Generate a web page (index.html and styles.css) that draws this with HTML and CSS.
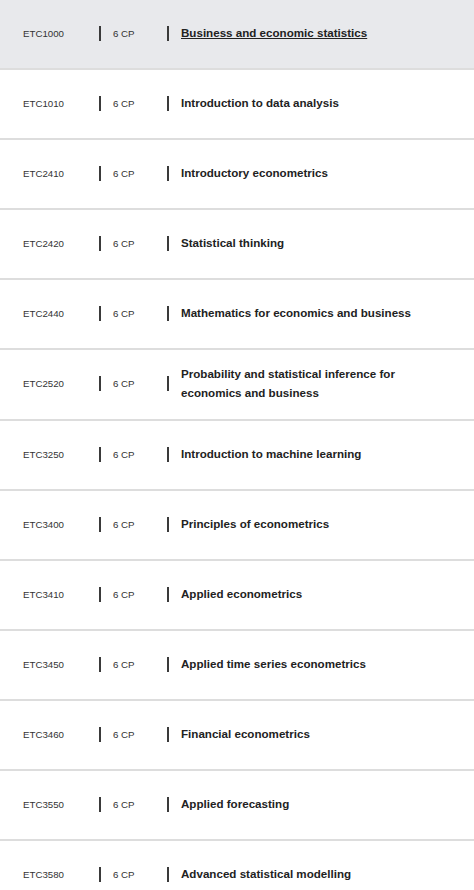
FILE: index.html
```html
<!DOCTYPE html>
<html lang="en">
<head>
<meta charset="utf-8">
<title>Units</title>
<link rel="stylesheet" href="styles.css">
</head>
<body>
<ul class="units">
  <li class="unit unit--active"><span class="code">ETC1000</span><span class="cp">6 CP</span><a class="title" href="#"><span class="title-text">Business and economic statistics</span></a></li>
  <li class="unit"><span class="code">ETC1010</span><span class="cp">6 CP</span><a class="title" href="#"><span class="title-text">Introduction to data analysis</span></a></li>
  <li class="unit"><span class="code">ETC2410</span><span class="cp">6 CP</span><a class="title" href="#"><span class="title-text">Introductory econometrics</span></a></li>
  <li class="unit"><span class="code">ETC2420</span><span class="cp">6 CP</span><a class="title" href="#"><span class="title-text">Statistical thinking</span></a></li>
  <li class="unit"><span class="code">ETC2440</span><span class="cp">6 CP</span><a class="title" href="#"><span class="title-text">Mathematics for economics and business</span></a></li>
  <li class="unit"><span class="code">ETC2520</span><span class="cp">6 CP</span><a class="title" href="#"><span class="title-text">Probability and statistical inference for economics and business</span></a></li>
  <li class="unit"><span class="code">ETC3250</span><span class="cp">6 CP</span><a class="title" href="#"><span class="title-text">Introduction to machine learning</span></a></li>
  <li class="unit"><span class="code">ETC3400</span><span class="cp">6 CP</span><a class="title" href="#"><span class="title-text">Principles of econometrics</span></a></li>
  <li class="unit"><span class="code">ETC3410</span><span class="cp">6 CP</span><a class="title" href="#"><span class="title-text">Applied econometrics</span></a></li>
  <li class="unit"><span class="code">ETC3450</span><span class="cp">6 CP</span><a class="title" href="#"><span class="title-text">Applied time series econometrics</span></a></li>
  <li class="unit"><span class="code">ETC3460</span><span class="cp">6 CP</span><a class="title" href="#"><span class="title-text">Financial econometrics</span></a></li>
  <li class="unit"><span class="code">ETC3550</span><span class="cp">6 CP</span><a class="title" href="#"><span class="title-text">Applied forecasting</span></a></li>
  <li class="unit"><span class="code">ETC3580</span><span class="cp">6 CP</span><a class="title" href="#"><span class="title-text">Advanced statistical modelling</span></a></li>
</ul>
</body>
</html>
```
FILE: styles.css
```css
* { box-sizing: border-box; }
html, body {
  margin: 0;
  padding: 0;
  background: #ffffff;
  font-family: "Liberation Sans", Arial, sans-serif;
  color: #222;
}
.units {
  list-style: none;
  margin: 0;
  padding: 0;
}
.unit {
  display: flex;
  align-items: center;
  min-height: 70px;
  padding: 15px 40px 17px 23px;
  border-bottom: 2px solid #dddddd;
}
.unit--active {
  background: #e8e9ec;
}
.code {
  flex: 0 0 76px;
  font-size: 9.7px;
  color: #333;
}
.cp {
  flex: 0 0 68px;
  display: flex;
  align-items: center;
  font-size: 9.7px;
  color: #333;
}
.cp::before,
.title::before {
  content: "";
  flex: 0 0 2px;
  width: 2px;
  height: 15px;
  background: #3a3a3a;
  margin-right: 12px;
}
.title {
  flex: 1;
  display: flex;
  align-items: center;
  font-size: 11.6px;
  line-height: 18.5px;
  font-weight: bold;
  color: #222;
  text-decoration: none;
}
.title-text {
  display: block;
}
.unit--active .title-text {
  text-decoration: underline;
}
```
